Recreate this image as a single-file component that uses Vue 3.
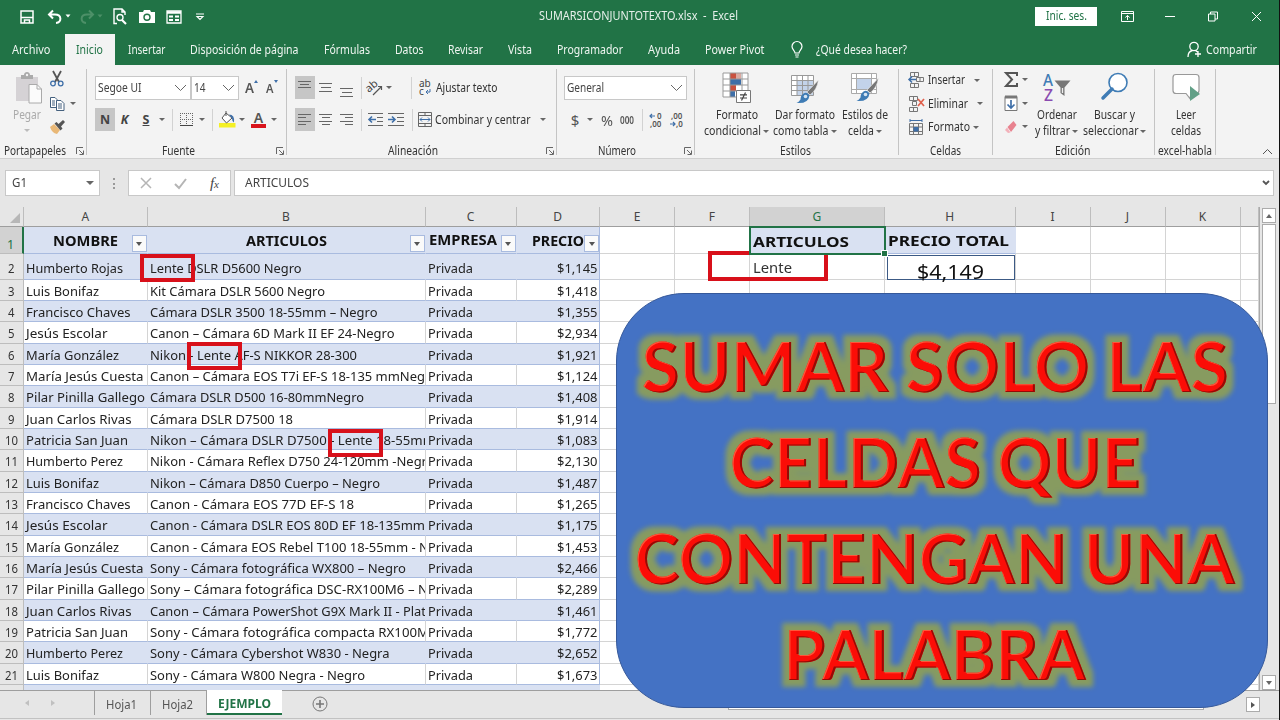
<template>
  <div class="excel">
    <header class="titlebar">
      <div class="quick">
        <svg width="14" height="14" viewBox="0 0 14 14" fill="none" stroke="#fff" stroke-width="1.5">
          <path d="M1 1h12v12H1zM1 7.6h12M4.5 13v-3h5v3"/>
        </svg>
        <svg width="24" height="16" viewBox="0 0 24 16" fill="none" stroke="#fff" stroke-width="2">
          <path d="M6 1.5 2 5.5l4 4M2 5.5h6c7 0 7 8 1 8.5"/>
          <path d="M18.500 5.500h5l-2.500 3z" fill="#fff" stroke="none"/>
        </svg>
        <svg width="24" height="16" viewBox="0 0 24 16" fill="none" stroke="#4d9068" stroke-width="2">
          <path d="m10 1.500 4 4-4 4M14 5.500H8c-7 0-7 8-1 8.500"/>
          <path d="M18.500 5.500h5l-2.500 3z" fill="#4d9068" stroke="none"/>
        </svg>
        <svg width="14" height="17" viewBox="0 0 14 17" fill="none" stroke="#fff" stroke-width="1.400">
          <path d="M4 15.500H1V1h8l3 3v3M9 1v3h3"/>
          <circle cx="7" cy="9.500" r="3"/>
          <path d="m9 12 4 4" stroke-width="2.200"/>
        </svg>
        <svg width="16" height="13" viewBox="0 0 16 13">
          <path d="M0 2h4l1-2h6l1 2h4v11H0z" fill="#fff"/>
          <circle cx="8" cy="7.200" r="3" fill="none" stroke="#217346" stroke-width="1.400"/>
        </svg>
        <svg width="16" height="14" viewBox="0 0 16 14" fill="none" stroke="#fff" stroke-width="1.300">
          <path d="M1 1h14v12H1z"/>
          <path d="M1 2.500h14" stroke-width="2.500"/>
          <path d="M3 6.500h4M3 10h4M9 6.500h4M9 10h4" stroke-width="2"/>
        </svg>
        <svg width="8" height="8" viewBox="0 0 8 8" fill="none" stroke="#fff" stroke-width="1.100">
          <path d="M0 1h8M1 3.500l3 3 3-3z"/>
        </svg>
      </div>
      <div class="doc"><span v-fit="199">SUMARSICONJUNTOTEXTO.xlsx &nbsp;-&nbsp; Excel</span></div>
      <div class="winbtns">
        <button class="login"><span v-fit="41">Inic. ses.</span></button>
        <svg width="13" height="11" viewBox="0 0 13 11" fill="none" stroke="#fff">
          <path d="M.5.5h12v10H.5zM.5 2.500h12M6.500 9V4.500M4.300 6.500l2.200-2 2.200 2"/>
        </svg>
        <svg width="10" height="11" viewBox="0 0 10 11" stroke="#fff"><path d="M0 5.500h10"/></svg>
        <svg width="10" height="11" viewBox="0 0 10 11" fill="none" stroke="#fff">
          <path d="M.5 3h6.500v7H.5zM2.500 3V1h7v7H7"/>
        </svg>
        <svg width="11" height="11" viewBox="0 0 11 11" stroke="#fff"><path d="m1 1 9 9m0-9-9 9"/></svg>
      </div>
    </header>

    <nav class="tabs">
      <div v-for="t in tabs" :key="t[0]" class="tab" :class="{ active: t[0] === 'Inicio' }">
        <span v-fit="t[1]">{{ t[0] }}</span>
      </div>
      <svg class="bulb" width="12" height="17" viewBox="0 0 12 17" fill="none" stroke="#fff" stroke-width="1.200">
        <path d="M4 12c0-2-3-3.500-3-6.500a5 5 0 0 1 10 0c0 3-3 4.500-3 6.500zM4 14h4M4.500 16h3"/>
      </svg>
      <div class="tab"><span v-fit="91">¿Qué desea hacer?</span></div>
      <div class="share">
        <svg width="15" height="17" viewBox="0 0 15 17" fill="none" stroke="#fff" stroke-width="1.300">
          <circle cx="7" cy="5.500" r="4.200"/>
          <path d="M1 16c0-4 2-6 4.500-6.500M8.500 9.500l2 1.500M11 10v6M8 13h6"/>
        </svg>
        <span v-fit="51">Compartir</span>
      </div>
    </nav>

    <section class="ribbon">
      <div class="group g-clip">
        <div class="body">
          <div class="paste">
            <svg width="28" height="33" viewBox="0 0 28 33">
              <path d="M1 5h22v24H1z" fill="#d5d2d5"/>
              <path d="M6 7V3h3c0-4 6-4 6 0h3v4z" fill="#aaa"/>
              <circle cx="12" cy="3" r="1.200" fill="#f3f3f3"/>
              <path d="M14 12.500h8l4.500 4.500v14H14z" fill="#fbfbfb" stroke="#aaa"/>
              <path d="M22 12.500V17h4.500" fill="none" stroke="#aaa"/>
            </svg>
            <span v-fit="28">Pegar</span>
            <i class="caret pale"></i>
          </div>
          <div class="clip-tools">
            <svg width="14" height="16" viewBox="0 0 14 16" fill="none" stroke="#555" stroke-width="1.800">
              <path d="m3 0 6 11M11 0 5 11"/>
              <g stroke="#3f6fa8" stroke-width="1.300"><circle cx="3" cy="12.500" r="2.300"/><circle cx="10.700" cy="12.500" r="2.300"/></g>
            </svg>
            <div class="row-c">
              <svg width="15" height="14" viewBox="0 0 15 14" fill="#fff" stroke="#44607e">
                <path d="M.5.5H5l2 2v8H.5zM2 4h3M2 6h3M2 8h3"/>
                <path d="M6.500 3.500H11l3 3v7H6.500zM8 7h4M8 9h4M8 11h4"/>
              </svg>
              <i class="caret"></i>
            </div>
            <svg width="15" height="14" viewBox="0 0 15 14">
              <path d="m0 7 4-3 6 6-3 4q-5-1-7-7z" fill="#e9b877"/>
              <path d="m4.500 3.500 2-1.500 2 2L13 0l2 2-4 4.500 1.500 2-2 2z" fill="#555"/>
            </svg>
          </div>
        </div>
        <div class="label"><div><span v-fit="62">Portapapeles</span></div><Launcher /></div>
      </div>

      <div class="group g-font">
        <div class="body two">
          <div class="font-top">
            <div class="combo"><span v-fit="43.5">Segoe UI</span><Chevron /></div>
            <div class="combo"><span v-fit="11.5">14</span><Chevron /></div>
            <div class="grow"><b v-fit="9">A</b><i class="up"></i></div>
            <div class="grow small"><b v-fit="7.5">A</b><i class="down"></i></div>
          </div>
          <div class="font-bottom">
            <b class="on">N</b>
            <b class="ital">K</b>
            <b class="under">S</b>
            <i class="caret"></i>
            <i class="sep"></i>
            <svg width="13" height="13" viewBox="0 0 13 13" fill="none" stroke="#666">
              <path d="M0 .5h13M.5 0v12M6.500 0v12M12.500 0v12M0 6.500h13" stroke-dasharray="1 1"/>
              <path d="M0 12.500h13" stroke="#444"/>
            </svg>
            <i class="caret"></i>
            <i class="sep"></i>
            <svg width="17" height="17" viewBox="0 0 17 17">
              <path d="M0 12h16.500v4.500H0z" fill="#f4f025"/>
              <path d="m7 2 6 5-5.500 5L3 7z" fill="#fff" stroke="#555"/>
              <path d="M7 5V0" stroke="#555"/>
              <path d="M10 3.500q6 0 5 8-2-1-2-4z" fill="#3f6fa8"/>
            </svg>
            <i class="caret"></i>
            <div class="fontcolor">A</div>
            <i class="caret"></i>
          </div>
        </div>
        <div class="label"><div><span v-fit="33">Fuente</span></div><Launcher /></div>
      </div>

      <div class="group g-align">
        <div class="body two">
          <div class="align-row">
            <span class="on"><svg width="14" height="20" viewBox="0 0 14 20" stroke="#666"><path d="M0 3.500h13M2 6.500h9M0 9.500h13"/></svg></span>
            <svg width="14" height="12" viewBox="0 0 14 12" stroke="#666"><path d="M0 1.500h13M2 5.500h10M0 9.500h13"/></svg>
            <svg width="14" height="20" viewBox="0 0 14 20" stroke="#666"><path d="M0 10.500h13M2 14.500h10M0 18.500h13"/></svg>
            <i class="sep"></i>
            <svg width="17" height="16" viewBox="0 0 17 16">
              <text x="0" y="10" font-size="11" transform="rotate(-40 5 9)" fill="#444">ab</text>
              <path d="m6 15 8-8M11 6.500h3.500V10" fill="none" stroke="#555" stroke-width="1.200"/>
            </svg>
            <i class="caret"></i>
            <i class="sep wide"></i>
            <div class="wrap">
              <svg width="13" height="17" viewBox="0 0 13 17">
                <text x="0" y="8" font-size="10" fill="#444">ab</text>
                <text x="0" y="16" font-size="10" fill="#444">c</text>
                <path d="M11 10v3H7m2-2-2 2 2 2" fill="none" stroke="#3f6fa8"/>
              </svg>
              <span v-fit="61.5">Ajustar texto</span>
            </div>
          </div>
          <div class="align-row low">
            <span class="on"><svg width="14" height="14" viewBox="0 0 14 14" stroke="#666"><path d="M0 1.500h13M0 4.500h8M0 8.500h13M0 11.500h8"/></svg></span>
            <svg width="14" height="14" viewBox="0 0 14 14" stroke="#666"><path d="M0 1.500h13M3 4.500h8M0 8.500h13M3 11.500h8"/></svg>
            <svg width="14" height="14" viewBox="0 0 14 14" stroke="#666"><path d="M0 1.500h13M5 4.500h8M0 8.500h13M5 11.500h8"/></svg>
            <i class="sep"></i>
            <svg width="16" height="14" viewBox="0 0 16 14" fill="none" stroke="#666">
              <path d="M0 .5h15M9 4.500h6M9 8.500h6M0 12.500h15"/>
              <path d="M8 6.500H1M4 3.500l-3 3 3 3" stroke="#3f6fa8" stroke-width="1.600"/>
            </svg>
            <svg width="16" height="14" viewBox="0 0 16 14" fill="none" stroke="#666">
              <path d="M0 .5h16M9 4.500h7M9 8.500h7M0 12.500h16"/>
              <path d="M0 6.500h7M4 3.500l3 3-3 3" stroke="#3f6fa8" stroke-width="1.600"/>
            </svg>
            <i class="sep"></i>
            <div class="wrap merge">
              <svg width="14" height="15" viewBox="0 0 14 15" fill="none" stroke="#666">
                <path d="M.5.5h13v14H.5zM.5 3.500h13M.5 11.500h13M7 .5v3M7 11.500v3"/>
                <path d="M2 7.500h10M4 5.500l-2 2 2 2M10 5.500l2 2-2 2" stroke="#3f6fa8"/>
              </svg>
              <span v-fit="95.5">Combinar y centrar</span>
              <i class="caret"></i>
            </div>
          </div>
        </div>
        <div class="label"><div><span v-fit="50">Alineación</span></div><Launcher /></div>
      </div>

      <div class="group g-num">
        <div class="body two">
          <div class="num-top"><div class="combo"><span v-fit="37">General</span><Chevron /></div></div>
          <div class="num-bottom">
            <span class="cur">$</span>
            <i class="caret"></i>
            <span class="pct"><span v-fit="12">%</span></span>
            <b class="zeros"><span v-fit="14">000</span></b>
            <i class="sep"></i>
            <svg width="14" height="16" viewBox="0 0 14 16">
              <text x="8" y="7" class="dg">0</text><text x="1" y="15" class="dg">,00</text>
              <path d="M6 4H1m2-2L1 4l2 2" fill="none" stroke="#3f6fa8" stroke-width="1.200"/>
            </svg>
            <svg width="14" height="16" viewBox="0 0 14 16">
              <text x="1" y="7" class="dg">,00</text><text x="6" y="15" class="dg">,0</text>
              <path d="M0 12h5m-2-2 2 2-2 2" fill="none" stroke="#3f6fa8" stroke-width="1.200"/>
            </svg>
          </div>
        </div>
        <div class="label"><div><span v-fit="38">Número</span></div><Launcher /></div>
      </div>

      <div class="group g-styles">
        <div class="body">
          <div class="big">
            <svg width="30" height="32" viewBox="0 0 30 32">
              <path d="M1 1h25v24H1z" fill="#fff"/>
              <path d="M8 1h6v6H8zM8 13h6v6H8z" fill="#c9513f"/>
              <path d="M8 7h11v6H8zM8 19h5v6H8z" fill="#3f6fa8"/>
              <path d="M14 1h5v6h-5z" fill="#dba9a0"/>
              <path d="M1 1h25v24H1zM1 7h25M1 13h25M1 19h25M8 1v24M20 1v24" fill="none" stroke="#999"/>
              <path d="M14.500 18.500h14v12h-14z" fill="#fff" stroke="#777"/>
              <path d="M18 22.800h7M18 26h7M23.500 20.500l-4 8" stroke="#444" stroke-width="1.200"/>
            </svg>
            <span v-fit="42">Formato</span>
            <div class="row-c"><span v-fit="57">condicional</span><i class="caret"></i></div>
          </div>
          <div class="big">
            <svg width="30" height="32" viewBox="0 0 30 32">
              <path d="M1.500 3.500h22v20h-22z" fill="#fff"/>
              <path d="M7 8h17v15H7z" fill="#c3d3ea"/>
              <path d="M1.500 3.500h22v20h-22zM1.500 8.500h22M1.500 13.500h22M1.500 18.500h22M7 3.500v20M12.500 3.500v20M18 3.500v20" fill="none" stroke="#999"/>
              <path d="M28.500 8 17 20l3 3q7-5 8.500-15z" fill="#777" stroke="#f3f3f3" stroke-width=".6"/>
              <path d="M19.500 23.500q-2-4-6-2-3 2-3 6-2 3-4 3.500 12 1 13-7.500z" fill="#3f7cb5"/>
              <circle cx="15.500" cy="24.500" r="1.800" fill="#d5e4f2"/>
            </svg>
            <span v-fit="60">Dar formato</span>
            <div class="row-c"><span v-fit="55.500">como tabla</span><i class="caret"></i></div>
          </div>
          <div class="big">
            <svg width="30" height="32" viewBox="0 0 30 32">
              <path d="M1.500 1.500h25v20h-25z" fill="#fff"/>
              <path d="M7 6h14v11H7z" fill="#c3d3ea"/>
              <path d="M1.500 1.500h25v20h-25zM1.500 6.500h25M1.500 17.500h25M6.500 1.500v20M21.500 1.500v20" fill="none" stroke="#aaa"/>
              <path d="M28.500 6 17 18l3 3q7-5 8.500-15z" fill="#777" stroke="#f3f3f3" stroke-width=".6"/>
              <path d="M19.500 21.500q-2-4-6-2-3 2-3 6-2 3-4 3.500 12 1 13-7.500z" fill="#3f7cb5"/>
              <circle cx="15.500" cy="22.500" r="1.800" fill="#d5e4f2"/>
            </svg>
            <span v-fit="46">Estilos de</span>
            <div class="row-c"><span v-fit="26">celda</span><i class="caret"></i></div>
          </div>
        </div>
        <div class="label"><div><span v-fit="31">Estilos</span></div></div>
      </div>

      <div class="group g-cells">
        <div class="body">
          <div class="line">
            <svg width="16" height="16" viewBox="0 0 16 16" fill="none" stroke="#777">
              <path d="M1.500.5h8v4h-8zM5.500.5v4M1.500 11.500h8v4h-8zM5.500 11.500v4M7.500 5.500h7v4h-7zM11 5.500v4"/>
              <path d="M7 7.500H0M3 4.500l-3 3 3 3" stroke="#3f6fa8" stroke-width="1.500"/>
            </svg>
            <span v-fit="37">Insertar</span><i class="caret far"></i>
          </div>
          <div class="line">
            <svg width="16" height="16" viewBox="0 0 16 16" fill="none" stroke="#777">
              <path d="M.5.5h8v4h-8zM4.500.5v4M.5 11.500h8v4h-8zM4.500 11.500v4M3.500 5.500h4v4h-4z"/>
              <path d="m9 3 6 7m0-7-6 7" stroke="#e0604c" stroke-width="1.700"/>
            </svg>
            <span v-fit="40">Eliminar</span><i class="caret far"></i>
          </div>
          <div class="line">
            <svg width="16" height="16" viewBox="0 0 16 16" fill="none" stroke="#777">
              <path d="M.5 4.500h13v11H.5zM4.500 4.500v11M9.500 4.500v11M.5 8h13M.5 12.500h13"/>
              <path d="M4.500 8h5v4.500h-5z" fill="#3f6fa8" stroke="none"/>
              <path d="M1 1.500h12M1 0v3M13 0v3" stroke="#3f6fa8"/>
            </svg>
            <span v-fit="42">Formato</span><i class="caret"></i>
          </div>
        </div>
        <div class="label"><div><span v-fit="31">Celdas</span></div></div>
      </div>

      <div class="group g-edit">
        <div class="body">
          <div class="edit-tools">
            <div class="row-c">
              <svg width="14" height="15" viewBox="0 0 14 15" fill="none" stroke="#555" stroke-width="2"><path d="M13 4V1H2l6 6.500L2 14h11v-3"/></svg>
              <i class="caret"></i>
            </div>
            <div class="row-c">
              <svg width="14" height="16" viewBox="0 0 14 16" fill="#fff" stroke="#777">
                <path d="M1 1.500h12v14H1z"/><path d="M1 2h12" stroke-width="3"/>
                <path d="M7 5v8M3.500 9.500 7 13l3.500-3.500" fill="none" stroke="#3f6fa8" stroke-width="1.700"/>
              </svg>
              <i class="caret"></i>
            </div>
            <div class="row-c">
              <svg width="14" height="14" viewBox="0 0 14 14">
                <path d="m3.500 7 6-6 3 4-5.500 7z" fill="#e8828f"/><path d="M3 7.500 1 10l3 3 2.500-.5z" fill="#f3b1ba"/>
              </svg>
              <i class="caret"></i>
            </div>
          </div>
          <div class="big sort">
            <svg width="30" height="32" viewBox="0 0 30 32">
              <text x="1" y="13.500" font-size="17" font-weight="500" fill="#3f7cb5" textLength="10" lengthAdjust="spacingAndGlyphs">A</text>
              <text x="2" y="28.500" font-size="17" font-weight="500" fill="#8a4bb0" textLength="9" lengthAdjust="spacingAndGlyphs">Z</text>
              <path d="M12.500 8.500h16l-6 7V24l-4-3v-5.500z" fill="#777"/>
              <path d="M20.500 16v5" stroke="#eee" stroke-width="1.300"/>
            </svg>
            <span v-fit="40">Ordenar</span>
            <div class="row-c"><span v-fit="35">y filtrar</span><i class="caret"></i></div>
          </div>
          <div class="big find">
            <svg width="30" height="32" viewBox="0 0 30 32" fill="none" stroke="#3f7cb5">
              <circle cx="18" cy="10.500" r="9" fill="#fff" stroke-width="1.600"/>
              <path d="m12 17-9 9" stroke-width="3.500" stroke-linecap="round"/>
            </svg>
            <span v-fit="41">Buscar y</span>
            <div class="row-c"><span v-fit="55.500">seleccionar</span><i class="caret"></i></div>
          </div>
        </div>
        <div class="label"><div><span v-fit="35.500">Edición</span></div></div>
      </div>

      <div class="group g-read">
        <div class="body">
          <div class="big">
            <svg width="30" height="32" viewBox="0 0 30 32">
              <path d="M5 2.500h20q3 0 3 3v13q0 3-3 3h-5l-1 5-4-5H5q-3 0-3-3v-13q0-3 3-3z" fill="#fff" stroke="#999" stroke-width="1.200"/>
              <path d="m19 14 10 8-10 7z" fill="#62a087"/>
            </svg>
            <span v-fit="20">Leer</span>
            <span v-fit="30">celdas</span>
          </div>
        </div>
        <div class="label"><div><span v-fit="54">excel-habla</span></div></div>
      </div>
      <svg class="collapse" width="11" height="7" viewBox="0 0 11 7" fill="none" stroke="#555"><path d="m1 6 4.500-4.500L10 6"/></svg>
    </section>

    <section class="formula">
      <div class="namebox"><span v-fit="15">G1</span><i class="caret"></i></div>
      <i class="dots"></i>
      <div class="fx">
        <svg width="10" height="10" viewBox="0 0 10 10" stroke="#b5b5b5" stroke-width="1.500"><path d="m0 0 10 10m0-10L0 10"/></svg>
        <svg width="13" height="11" viewBox="0 0 13 11" fill="none" stroke="#b5b5b5" stroke-width="2"><path d="m1 6 4 4 7-9"/></svg>
        <em>f<small>x</small></em>
      </div>
      <div class="content">
        <span v-fit="64">ARTICULOS</span>
        <svg width="8" height="6" viewBox="0 0 8 6" fill="none" stroke="#555" stroke-width="1.800"><path d="m1 1 3 3 3-3"/></svg>
      </div>
    </section>

    <section class="work">
      <div class="sheet">
        <div class="srow cols">
          <div class="corner"></div>
          <div v-for="c in 'ABCDEFGHIJK'" :key="c" class="col" :class="{ sel: c === 'G' }">{{ c }}</div>
          <div class="col"></div>
        </div>
        <div class="srow head">
          <div class="num sel">1</div>
          <div class="th"><span v-fit="65">NOMBRE</span><i class="filter"></i></div>
          <div class="th"><span v-fit="81">ARTICULOS</span><i class="filter"></i></div>
          <div class="th raised"><span v-fit="68">EMPRESA</span><i class="filter"></i></div>
          <div class="th"><span v-fit="52">PRECIO</span><i class="filter"></i></div>
          <div></div><div></div>
          <div class="th active"><span v-fit="96">ARTICULOS</span><i class="handle"></i></div>
          <div class="th total"><span v-fit="121">PRECIO TOTAL</span></div>
          <div></div><div></div><div></div><div></div>
        </div>
        <div v-for="(r, i) in rows" :key="i" class="srow data" :class="{ band: i % 2 === 0, second: i === 0 }">
          <div class="num"><span v-fit="i < 8 ? 6.5 : 13">{{ i + 2 }}</span></div>
          <div class="td"><span v-fit="r[1]">{{ r[0] }}</span></div>
          <div class="td"><span v-fit="r[3]">{{ r[2] }}</span></div>
          <div class="td"><span v-fit="45">Privada</span></div>
          <div class="td price"><span v-fit="40.5">{{ r[4] }}</span></div>
          <div></div><div></div>
          <div class="query"><span v-if="i === 0" v-fit="39">Lente</span></div>
          <div><span v-if="i === 0" class="sum"><span v-fit="67">$4,149</span></span></div>
          <div></div><div></div><div></div><div></div>
        </div>
        <div class="srow data band">
          <div class="num"></div>
          <div class="td"></div><div class="td"></div><div class="td"></div><div class="td"></div>
          <div v-for="n in 8" :key="n"></div>
        </div>
      </div>
      <div class="vscroll">
        <i class="arrow-btn"><i class="tri up"></i></i>
        <i class="thumb"></i>
        <i class="arrow-btn end"><i class="tri down"></i></i>
      </div>
      <i class="mark m1"></i>
      <i class="mark m2"></i>
      <i class="mark m3"></i>
      <i class="mark m4"></i>
    </section>

    <footer class="sheets">
      <div class="nav"><i></i><i></i></div>
      <div class="stab"><span v-fit="31">Hoja1</span></div>
      <div class="stab"><span v-fit="31">Hoja2</span></div>
      <div class="stab current"><span v-fit="53">EJEMPLO</span></div>
      <svg class="add" width="16" height="16" viewBox="0 0 16 16" fill="none" stroke="#777">
        <circle cx="8" cy="8" r="7"/><path d="M8 4v8M4 8h8" stroke-width="1.600"/>
      </svg>
      <div class="hscroll"></div>
      <i class="arrow-btn right"><i class="tri side"></i></i>
    </footer>

    <div class="callout">
      <h1>
        <span v-for="l in callout" :key="l[0]"><span v-fit="l[1]">{{ l[0] }}</span></span>
      </h1>
    </div>

    <!-- olive glow and bevelled edges for the callout letters -->
    <svg class="defs" width="0" height="0">
      <filter id="wordart" x="-10%" y="-10%" width="120%" height="120%" color-interpolation-filters="sRGB">
        <feMorphology in="SourceAlpha" operator="dilate" radius="7" result="fat"/>
        <feGaussianBlur in="fat" stdDeviation="2.600" result="soft"/>
        <feFlood flood-color="#879b60"/>
        <feComposite in2="soft" operator="in" result="glow"/>
        <feOffset in="SourceAlpha" dx="1.300" dy="1.300" result="o1"/>
        <feFlood flood-color="#ff5638"/>
        <feComposite in2="SourceAlpha" operator="in"/>
        <feComposite in2="o1" operator="out" result="light"/>
        <feOffset in="SourceAlpha" dx="-2" dy="-1.500" result="o2"/>
        <feFlood flood-color="#960a05"/>
        <feComposite in2="SourceAlpha" operator="in"/>
        <feComposite in2="o2" operator="out" result="dark"/>
        <feMerge>
          <feMergeNode in="glow"/>
          <feMergeNode in="SourceGraphic"/>
          <feMergeNode in="light"/>
          <feMergeNode in="dark"/>
        </feMerge>
      </filter>
    </svg>
  </div>
</template>

<script setup>
import { h } from 'vue'

// squeezes a label to a given width, the layout box follows
const vFit = {
  mounted(el, { value }) {
    el.style.display = 'inline-block'
    const w = el.getBoundingClientRect().width
    if (!w) return
    el.style.transform = `scaleX(${value / w})`
    el.style.marginRight = `${value - w}px`
  }
}

const icon = (cls, size, d) => () =>
  h('svg', { class: cls, width: size[0], height: size[1], viewBox: `0 0 ${size[0]} ${size[1]}`, fill: 'none', stroke: '#666' }, [h('path', { d })])

const Launcher = icon('launcher', [8, 8], 'M.5 7V.5H7M3 3l4 4M7.5 3.500v4h-4')
const Chevron = icon('chevron', [13, 8], 'M1 1l5.500 5.500L12 1')

const tabs = [
  ['Archivo', 38.5],
  ['Inicio', 27],
  ['Insertar', 37.5],
  ['Disposición de página', 108.5],
  ['Fórmulas', 46],
  ['Datos', 28.5],
  ['Revisar', 35],
  ['Vista', 24],
  ['Programador', 66],
  ['Ayuda', 32],
  ['Power Pivot', 59.5]
]

const rows = [
  ['Humberto Rojas', 97, 'Lente DSLR D5600 Negro', 151.5, '$1,145'],
  ['Luis Bonifaz', 73, 'Kit Cámara DSLR 5600 Negro', 175, '$1,418'],
  ['Francisco Chaves', 104.5, 'Cámara DSLR 3500 18-55mm – Negro', 227.5, '$1,355'],
  ['Jesús Escolar', 81.5, 'Canon – Cámara 6D Mark II EF 24-Negro', 244.5, '$2,934'],
  ['María González', 93, 'Nikon - Lente AF-S NIKKOR 28-300', 207, '$1,921'],
  ['María Jesús Cuesta', 117.5, 'Canon – Cámara EOS T7i EF-S 18-135 mmNeg', 275, '$1,124'],
  ['Pilar Pinilla Gallego', 119, 'Cámara DSLR D500 16-80mmNegro', 214, '$1,408'],
  ['Juan Carlos Rivas', 105.5, 'Cámara DSLR D7500 18', 143, '$1,914'],
  ['Patricia San Juan', 102, 'Nikon – Cámara DSLR D7500 - Lente 18-55mm', 285, '$1,083'],
  ['Humberto Perez', 97, 'Nikon - Cámara Reflex D750 24-120mm -Negr', 277, '$2,130'],
  ['Luis Bonifaz', 73, 'Nikon – Cámara D850 Cuerpo – Negro', 230, '$1,487'],
  ['Francisco Chaves', 104.5, 'Canon - Cámara EOS 77D EF-S 18', 204, '$1,265'],
  ['Jesús Escolar', 81.5, 'Canon - Cámara DSLR EOS 80D EF 18-135mm', 275, '$1,175'],
  ['María González', 93, 'Canon - Cámara EOS Rebel T100 18-55mm - N', 279, '$1,453'],
  ['María Jesús Cuesta', 117.5, 'Sony - Cámara fotográfica WX800 – Negro', 256, '$2,466'],
  ['Pilar Pinilla Gallego', 119, 'Sony – Cámara fotográfica DSC-RX100M6 – N', 278, '$2,289'],
  ['Juan Carlos Rivas', 105.5, 'Canon – Cámara PowerShot G9X Mark II - Plat', 276, '$1,461'],
  ['Patricia San Juan', 102, 'Sony - Cámara fotográfica compacta RX100M', 279, '$1,772'],
  ['Humberto Perez', 97, 'Sony - Cámara Cybershot W830 - Negra', 239.5, '$2,652'],
  ['Luis Bonifaz', 73, 'Sony - Cámara W800 Negra - Negro', 215, '$1,673']
]

const callout = [
  ['SUMAR SOLO LAS', 587],
  ['CELDAS QUE', 411],
  ['CONTENGAN UNA', 600],
  ['PALABRA', 302]
]
</script>

<style>
body {
  margin: 0;
  overflow: hidden;
}
.launcher {
  flex: none;
  margin-right: 1px;
}
.combo .chevron {
  margin-left: auto;
  margin-right: 3px;
}
</style>

<style scoped>
* {
  box-sizing: border-box;
}

.excel {
  position: relative;
  width: 1280px;
  height: 720px;
  overflow: hidden;
  display: flex;
  flex-direction: column;
  background: #e6e6e6;
  border-right: 1.5px solid #111;
  font-family: "Noto Sans", "Open Sans", sans-serif;
  font-size: 12px;
  line-height: 16px;
  color: #333;
  white-space: nowrap;
}

.excel span {
  transform-origin: left center;
  flex: none;
}

.excel b {
  transform-origin: left center;
}

svg {
  display: block;
  flex: none;
  overflow: visible;
}

i {
  display: block;
  flex: none;
}

.caret {
  width: 0;
  height: 0;
  border: 3px solid transparent;
  border-top: 3px solid #666;
  border-bottom: 0;
}

.caret.pale {
  border-top-color: #bbb;
}

.row-c {
  display: flex;
  align-items: center;
}

/* title bar and tabs */
.titlebar {
  display: grid;
  grid-template-columns: 539px 1fr 244px;
  align-items: center;
  height: 34px;
  padding-bottom: 2px;
  background: #217346;
  color: #e6f0ea;
}

.quick {
  display: grid;
  grid-template-columns: 27px 32px 34px 26px 27px 30px 10px;
  align-items: center;
  padding-left: 20px;
  padding-top: 1px;
}

.winbtns {
  display: grid;
  grid-template-columns: 86px 44px 43px 43px 12px;
  align-items: center;
}

.login {
  width: 62px;
  height: 19px;
  padding: 0;
  border: 0;
  background: #fff;
  color: #217346;
  font: inherit;
}

.tabs {
  display: flex;
  gap: 25px;
  align-items: center;
  height: 31px;
  padding-left: 12px;
  background: #217346;
  color: #eef5f0;
}

.tab {
  display: flex;
  align-items: center;
  height: 31px;
}

.tab.active {
  margin: 0 -12px 0 -11px;
  padding: 0 12px 0 11px;
  background: #f3f3f3;
  color: #217346;
}

.bulb {
  margin: 0 -12px 0 1px;
}

.share {
  display: flex;
  align-items: center;
  gap: 4px;
  margin-left: auto;
  margin-right: 22px;
}

/* ribbon */
.ribbon {
  display: flex;
  height: 94px;
  background: #f3f3f3;
  border-bottom: 1px solid #d0d0d0;
}

.group {
  position: relative;
  display: grid;
  grid-template-rows: 78px 16px;
  flex: none;
}

.group::after {
  content: "";
  position: absolute;
  right: 0;
  top: 4px;
  bottom: 3px;
  width: 1px;
  background: #c4c4c4;
}

.label {
  display: flex;
  align-items: center;
  padding-right: 2px;
}

.label > div {
  flex: 1;
  min-width: 0;
  text-align: center;
}

.g-clip { width: 87px; }
.g-font { width: 200px; }
.g-align { width: 269.5px; }
.g-num { width: 138px; }
.g-styles { width: 204.5px; }
.g-cells { width: 94px; }
.g-edit { width: 162px; }
.g-read { width: 61px; }

.g-clip .label > div,
.g-font .label > div,
.g-align .label > div,
.g-num .label > div {
  padding-right: 6px;
}

.g-clip .body {
  display: flex;
}

.paste {
  display: flex;
  flex-direction: column;
  align-items: center;
  width: 54px;
  padding-top: 7px;
  color: #aaa;
}

.paste svg {
  margin-left: 4px;
}

.paste span {
  margin-top: 2px;
}

.paste .caret {
  margin-top: 6px;
}

.clip-tools {
  display: grid;
  grid-template-rows: 22px 27px 20px;
  align-items: center;
  margin-left: -4px;
  padding-top: 3px;
}

.clip-tools .caret {
  margin-left: 5px;
}

.body.two {
  display: grid;
  grid-template-rows: 23px 23px;
  row-gap: 9px;
  padding-top: 11px;
}

.combo {
  display: flex;
  align-items: center;
  height: 24px;
  padding-left: 2px;
  border: 1px solid #c8c8c8;
  background: #fff;
  color: #444;
}

.font-top {
  display: grid;
  grid-template-columns: 96px 48px 21px 20px;
  padding-left: 8px;
}

.grow {
  display: flex;
  padding-left: 6px;
  padding-top: 4px;
  font-size: 14px;
  color: #555;
}

.grow b {
  font-weight: 600;
}

.grow.small {
  font-size: 12px;
  padding-top: 5px;
}

.grow i {
  border: 2px solid transparent;
  height: 0;
}

.grow .up {
  border-bottom: 3px solid #3f6fa8;
  border-top: 0;
}

.grow .down {
  border-top: 3px solid #3f6fa8;
  border-bottom: 0;
  margin-top: -1px;
}

.font-bottom {
  display: grid;
  grid-template-columns: 20px 19px 24px 8px 12px 16px 16px 4px 26px 4px 29px 2px;
  padding-left: 8px;
  align-items: center;
  justify-items: center;
  color: #444;
  font-size: 12.5px;
}

.on {
  display: grid;
  place-items: center;
  width: 20px;
  height: 23px;
  background: #c6c6c6;
}

.ital {
  font-style: italic;
}

.under {
  text-decoration: underline;
}

.sep {
  width: 1px;
  height: 22px;
  background: #d2d2d2;
}

.fontcolor {
  width: 15px;
  height: 17px;
  border-bottom: 4px solid #d9141c;
  text-align: center;
  font-size: 14px;
  line-height: 13px;
  font-weight: 600;
  color: #555;
}

.align-row {
  display: grid;
  grid-template-columns: 20px 21px 21px 8px 21px 6px 27px auto;
  padding-left: 8px;
  align-items: center;
  justify-items: center;
}

.align-row.low {
  grid-template-columns: 20px 21px 21px 8px 21px 20px 12px auto;
}

.sep.wide {
  margin-left: 11px;
}

.wrap {
  display: flex;
  align-items: center;
  justify-self: start;
  gap: 4px;
}

.wrap.merge {
  gap: 3px;
}

.wrap .caret {
  margin-left: 6px;
}

.num-top {
  padding-left: 7.5px;
}

.num-top .combo {
  width: 123px;
}

.num-bottom {
  display: grid;
  grid-template-columns: 22px 8px 26px 14px 16px 11px 31px;
  padding-left: 7.5px;
  align-items: center;
  justify-items: center;
  color: #555;
}

.cur {
  font-size: 15px;
}

.pct {
  font-size: 15px;
}

.zeros {
  font-size: 10px;
  font-weight: 600;
}

.dg {
  font-size: 8px;
  font-weight: 600;
  fill: #555;
}

.big {
  display: grid;
  grid-template-columns: 100%;
  grid-template-rows: 35px 16px 16px;
  justify-items: center;
  padding-top: 7px;
}

.big .caret {
  margin-left: 2px;
}

.g-styles .body {
  display: grid;
  grid-template-columns: 84px 53px 67px;
}

.g-cells .body {
  display: grid;
  grid-template-rows: repeat(3, 23.5px);
  padding: 3.5px 0 0 10px;
}

.line {
  display: flex;
  align-items: center;
  gap: 3px;
}

.line .far {
  margin-left: 6px;
}

.g-edit .body {
  display: grid;
  grid-template-columns: 35px 57px 59px;
}

.edit-tools {
  display: grid;
  grid-template-rows: repeat(3, 23.5px);
  padding: 3px 0 0 11px;
}

.edit-tools .caret {
  margin-left: 4px;
}

.collapse {
  margin-left: 46px;
  margin-top: 83px;
}

/* formula bar */
.formula {
  display: flex;
  align-items: center;
  flex: none;
  height: 48px;
  padding-left: 5px;
  color: #444;
}

.namebox {
  display: flex;
  align-items: center;
  justify-content: space-between;
  width: 95px;
  height: 26px;
  padding: 0 5px 0 6px;
  border: 1px solid #c8c8c8;
  background: #fff;
}

.namebox .caret {
  border-width: 4px 4px 0;
}

.dots {
  width: 2px;
  height: 11px;
  margin: 0 13px;
  background: repeating-linear-gradient(#999 0 2px, transparent 2px 4.500px);
}

.fx {
  display: flex;
  align-items: center;
  justify-content: space-between;
  width: 103px;
  height: 26px;
  padding: 0 11px 0 12px;
  border: 1px solid #c8c8c8;
  background: #fff;
}

.fx em {
  font: italic 15px/16px "Liberation Serif", serif;
}

.fx small {
  font-size: 11px;
}

.content {
  display: flex;
  align-items: center;
  justify-content: space-between;
  width: 1040px;
  height: 26px;
  margin-left: 3px;
  padding: 0 3px 0 10px;
  border: 1px solid #c8c8c8;
  background: #fff;
}

/* worksheet */
.work {
  position: relative;
  display: flex;
  flex: none;
  height: 483px;
}

.sheet {
  width: 1259.5px;
  height: 483px;
  overflow: hidden;
  background: #fff;
  border-right: 1.5px solid #aaa;
}

.srow {
  display: grid;
  grid-template-columns: 24px 123.5px 278px 91px 83.5px 75px 74.5px 135.5px 130.5px 75px 75px 75px 1fr;
  grid-template-rows: 100%;
}

.srow > div {
  position: relative;
  border-right: 1px solid #d4d4d4;
  border-bottom: 1px solid #d4d4d4;
}

.cols {
  height: 20px;
  background: #e6e6e6;
}

.cols > div {
  border-right-color: #bdbdbd;
  border-bottom-color: #9e9e9e;
  text-align: center;
  line-height: 20px;
  color: #444;
}

.cols > .sel {
  background: #d2d2d2;
  color: #217346;
}

.corner::after {
  content: "";
  position: absolute;
  right: 3px;
  bottom: 3px;
  border: 5.5px solid transparent;
  border-right-color: #b7b7b7;
  border-bottom-color: #b7b7b7;
}

.srow > .num {
  background: #e6e6e6;
  border-color: #bdbdbd;
  text-align: center;
  color: #333;
  font-size: 12.5px;
  padding-right: 1px;
}

.srow > .num.sel {
  background: #d2d2d2;
  border-right: 2px solid #217346;
  color: #217346;
}

.head {
  height: 27px;
}

.head .num {
  line-height: 35px;
}

.th {
  font-size: 14.5px;
  font-weight: 700;
  line-height: 27px;
  color: #111;
  background: #d9e1f2;
  text-align: center;
}

.head > .th {
  border-color: #a9bbdf;
  border-right-color: #d9e1f2;
}

.head > .th.raised {
  text-align: left;
  padding-left: 3px;
  line-height: 24px;
}

.head > .th:nth-child(5) {
  text-align: right;
  padding-right: 15px;
  border-right-color: #a9bbdf;
}

.filter {
  position: absolute;
  right: 0;
  bottom: 1px;
  width: 15px;
  height: 17px;
  border: 1px solid #a9bbdf;
  background: #fafafa;
}

.filter::after {
  content: "";
  position: absolute;
  left: 3.5px;
  top: 6px;
  border: 3px solid transparent;
  border-top: 4px solid #555;
  border-bottom: 0;
}

.head > .th.active {
  margin: -1px -1px -1px -1px;
  border: 2px solid #217346;
  line-height: 26px;
  text-align: left;
  padding-left: 2px;
  z-index: 1;
}

.handle {
  position: absolute;
  right: -4px;
  bottom: -4px;
  width: 5px;
  height: 5px;
  background: #217346;
  border: 1px solid #fff;
  box-sizing: content-box;
}

.head > .th.total {
  text-align: left;
  padding-left: 3px;
}

.data {
  height: 21.34px;
}

.data.second {
  height: 25.6px;
}

.data > .num {
  line-height: 23.5px;
}

.second > .num {
  line-height: 30px;
}

.td {
  overflow: hidden;
  padding-left: 2px;
  font-size: 13px;
  line-height: 22.5px;
  color: #222;
}

.second > .td {
  line-height: 29px;
}

.data > .td {
  border-bottom-color: #a9bbdf;
}

.band > .td {
  background: #d9e1f2;
  border-right-color: #d9e1f2;
}

.data > .td.price {
  padding: 0 2px 0 0;
  text-align: right;
  border-right-color: #a9bbdf;
}

.query {
  padding-left: 3.5px;
  font-size: 14px;
  line-height: 27px;
}

.sum {
  position: absolute;
  left: 2px;
  right: 0;
  top: 1px;
  bottom: -1px;
  border: 1px solid #3c5a85;
  text-align: center;
  font-size: 20px;
  line-height: 31px;
  color: #111;
}

.vscroll {
  display: flex;
  flex-direction: column;
  width: 14px;
  margin-left: 2.5px;
  padding-top: 1px;
}

.arrow-btn {
  display: grid;
  place-items: center;
  width: 14px;
  height: 15px;
  border: 1px solid #ababab;
  background: #fff;
}

.arrow-btn.end {
  margin-top: auto;
}

.tri {
  border: 3.5px solid transparent;
}

.tri.up {
  border-bottom: 4px solid #666;
  border-top: 0;
}

.tri.down {
  border-top: 4px solid #666;
  border-bottom: 0;
}

.tri.side {
  border-left: 4px solid #555;
  border-right: 0;
}

.thumb {
  height: 180px;
  margin-top: 1px;
  border: 1px solid #ababab;
  background: #fff;
}

.mark {
  position: absolute;
  width: 55px;
  height: 28px;
  border: 4px solid #d8101a;
}

.m1 { left: 140px; top: 46.5px; }
.m2 { left: 187px; top: 135px; }
.m3 { left: 328px; top: 222px; }
.m4 { left: 707.5px; top: 43.5px; width: 120px; height: 30.5px; }

/* sheet tabs */
.sheets {
  display: flex;
  flex: none;
  height: 29px;
  border-top: 1px solid #9e9e9e;
  border-bottom: 1px solid #c2c2c2;
  font-size: 13px;
  line-height: 26px;
  color: #555;
}

.nav {
  display: flex;
  align-items: center;
  gap: 22px;
  width: 95px;
  padding-left: 25px;
  border-right: 1px solid #9e9e9e;
  height: 24px;
}

.nav i {
  border: 3px solid transparent;
  border-right: 4px solid #c0c0c0;
  border-left: 0;
}

.nav i + i {
  transform: rotate(180deg);
}

.stab {
  width: 56px;
  height: 24px;
  padding-left: 11px;
  border-right: 1px solid #9e9e9e;
}

.stab.current {
  width: 75px;
  margin-top: -1px;
  height: 25px;
  border: 0;
  border-bottom: 2px solid #217346;
  background: #fff;
  color: #217346;
  font-weight: 700;
}

.add {
  margin: 5px 0 0 30px;
}

.hscroll {
  flex: 1;
  margin: 6px 42px 8px 400px;
  border: 1px solid #ababab;
  background: #fff;
}

.arrow-btn.right {
  margin: 6px 19.5px 0 0;
}

/* callout over the sheet */
.callout {
  position: absolute;
  left: 615.5px;
  top: 293px;
  width: 652.5px;
  height: 415px;
  border: 1px solid #35589a;
  border-radius: 68px;
  background: #4472c4;
}

.callout h1 {
  margin: 24px 13px 0 0;
  filter: url(#wordart);
  font: 700 68px/96px Lato, sans-serif;
  color: #fb0d07;
  text-align: center;
}

.callout h1 > span {
  display: block;
}

.defs {
  position: absolute;
}
</style>
